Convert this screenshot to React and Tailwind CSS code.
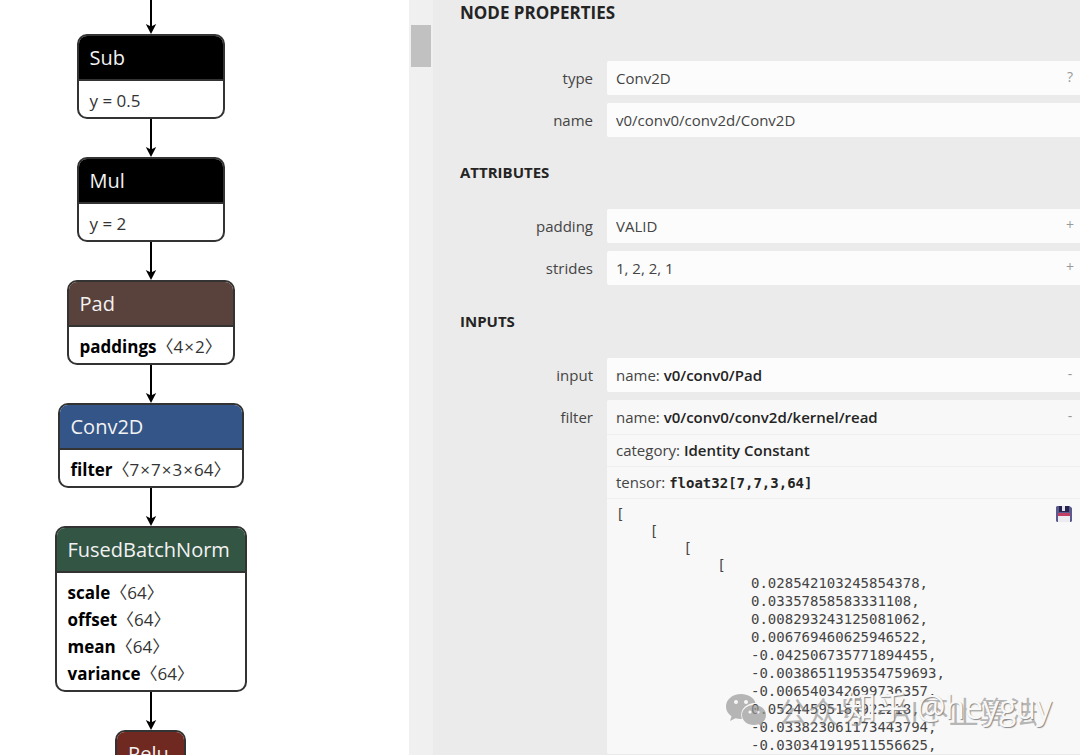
import React, { useState } from "react";

const nodes = [
    {
        name: "Sub",
        width: "w-[148px]",
        color: "bg-black",
        rows: [{ text: "y = 0.5" }],
    },
    {
        name: "Mul",
        width: "w-[148px]",
        color: "bg-black",
        rows: [{ text: "y = 2" }],
    },
    {
        name: "Pad",
        width: "w-[168px]",
        color: "bg-[#59423b]",
        rows: [{ label: "paddings", shape: [4, 2] }],
    },
    {
        name: "Conv2D",
        width: "w-[186px]",
        color: "bg-[#335588]",
        rows: [{ label: "filter", shape: [7, 7, 3, 64] }],
    },
    {
        name: "FusedBatchNorm",
        width: "w-[192px]",
        color: "bg-[#335544]",
        rows: [
            { label: "scale", shape: [64] },
            { label: "offset", shape: [64] },
            { label: "mean", shape: [64] },
            { label: "variance", shape: [64] },
        ],
    },
    { name: "Relu", width: "w-[71px]", color: "bg-[#702921]", rows: [] },
];

const brackets = `[
    [
        [
            [`;

const values = [
    "0.028542103245854378",
    "0.03357858583331108",
    "0.008293243125081062",
    "0.006769460625946522",
    "-0.042506735771894455",
    "-0.0038651195354759693",
    "-0.006540342699736357",
    "0.05244595184922218",
    "-0.033823061173443794",
    "-0.030341919511556625",
];

function Arrow() {
    return (
        <svg width="14" height="38" viewBox="0 0 14 38" className="block">
            <path d="M7 0V34" stroke="#000" strokeWidth="2" />
            <path d="M7 38L1.8 28L7 30.5L12.2 28Z" />
        </svg>
    );
}

function Shape({ dims }) {
    return (
        <span>
            〈
            {dims.map((dim, i) => (
                <React.Fragment key={i}>
                    {i > 0 && <span className="px-px">×</span>}
                    {dim}
                </React.Fragment>
            ))}
            〉
        </span>
    );
}

function GraphNode({ node }) {
    return (
        <div
            className={`${node.width} overflow-hidden rounded-[10px] border-2 border-[#333] bg-white`}
        >
            <h2
                className={`${node.color} h-[45px] border-b-2 border-[#333] pl-[11px] text-xl leading-[44px] text-[#f2f2f2]`}
            >
                {node.name}
            </h2>
            <ul className="px-[11px] pt-[6px] pb-[3px] text-[17px] leading-[27px] text-[#333]">
                {node.rows.map((row) => (
                    <li key={row.label || row.text} className="whitespace-nowrap">
                        {row.label && (
                            <b className="font-bold text-black">{row.label}</b>
                        )}
                        {row.shape ? <Shape dims={row.shape} /> : row.text}
                    </li>
                ))}
            </ul>
        </div>
    );
}

function Section({ title, children }) {
    return (
        <section>
            <h3 className="mb-[27px] leading-[20px] font-bold text-[#242424]">
                {title}
            </h3>
            <div className="mb-[26px] flex flex-col gap-2">{children}</div>
        </section>
    );
}

function Toggle({ sign, label, onClick }) {
    return (
        <button
            type="button"
            aria-label={label}
            onClick={onClick}
            className="h-[34px] w-5 shrink-0 pb-0.5 text-center text-sm text-[#999]"
        >
            {sign}
        </button>
    );
}

function Field({ id, value, sign }) {
    return (
        <div className="flex">
            <label
                htmlFor={id}
                className="w-[133px] shrink-0 text-right leading-[34px] text-[#444]"
            >
                {id}
            </label>
            <div className="ml-[14px] flex flex-1 rounded-l-xs bg-[#fcfcfc]">
                <input
                    id={id}
                    readOnly
                    defaultValue={value}
                    className="h-[34px] min-w-0 flex-1 pl-[9px] text-[#444] outline-none"
                />
                {sign && <Toggle sign={sign} label={`Expand ${id}`} />}
            </div>
        </div>
    );
}

function Argument({ id, name, color, onToggle, children }) {
    return (
        <div className="flex">
            <span className="w-[133px] shrink-0 text-right leading-[34px] text-[#444]">
                {id}
            </span>
            <div className={`${color} ml-[14px] min-w-0 flex-1 rounded-l-xs`}>
                <div className="flex h-[34px] justify-between">
                    <p className="pl-[9px] leading-[34px]">
                        name: <b className="font-semibold text-[#242424]">{name}</b>
                    </p>
                    <Toggle sign="-" label={`Collapse ${id}`} onClick={onToggle} />
                </div>
                {children}
            </div>
        </div>
    );
}

function SaveIcon() {
    return (
        <svg width="16" height="16" viewBox="0 0 16 16">
            <path d="M1 0H13.500L16 2V15L15 16H1L0 15V1Z" fill="#5a5a8c" />
            <path d="M3 0H13V6H3Z" fill="#28234c" />
            <path d="M6 0H9V5H6Z" fill="#e4e2f0" />
            <path d="M2 7H14V10H2Z" fill="#c43d62" />
            <path d="M2 10H14V16H2Z" fill="#ececf0" />
        </svg>
    );
}

function Watermark() {
    return (
        <div className="pointer-events-none absolute right-7 bottom-5 h-12 w-[326px]">
            <div className="flex h-full items-center gap-3 text-[30px] whitespace-nowrap text-[#8a8a8a]/60">
                <svg
                    width="40"
                    height="34"
                    viewBox="0 0 40 34"
                    className="shrink-0 opacity-70"
                >
                    <path
                        d="M15 0C6.500 0 0 5.500 0 12.500C0 16.500 2 20 5.500 22.200L4 27L9.500 24.200C11.300 24.700 13 25 15 25H16C13 16 20 9 29.500 9C28 3.500 22 0 15 0Z"
                        fill="#999"
                    />
                    <path
                        d="M28 11C21 11 16 15.500 16 21C16 27 21.500 31 28 31C29.500 31 31 30.800 32.500 30.300L37 33L36 28.800C38.500 27 40 24.200 40 21C40 15.500 35 11 28 11Z"
                        fill="#999"
                    />
                    <circle cx="10" cy="8" r="2" fill="#f8f8f8" />
                    <circle cx="20" cy="8" r="2" fill="#f8f8f8" />
                    <circle cx="24" cy="18" r="1.600" fill="#f8f8f8" />
                    <circle cx="32" cy="18" r="1.600" fill="#f8f8f8" />
                </svg>
                <span>公众号 · AI不止算法</span>
            </div>
            <span className="absolute right-0 bottom-2 text-[32px] leading-10 whitespace-nowrap text-[#f8f8f8] [text-shadow:1px_1px_1px_#888]">
                知乎 @heyguy
            </span>
        </div>
    );
}

export default function App() {
    const [open, setOpen] = useState(true);

    return (
        <div className="relative flex h-screen overflow-hidden bg-white font-['Open_Sans','Noto_Sans_CJK_SC',sans-serif]">
            <main className="w-[409px] shrink-0">
                <div className="-mt-1 flex w-[301px] flex-col items-center">
                    {nodes.map((node) => (
                        <React.Fragment key={node.name}>
                            <Arrow />
                            <GraphNode node={node} />
                        </React.Fragment>
                    ))}
                </div>
            </main>
            <div className="w-6 shrink-0 bg-[#f0f0f0] px-0.5 pt-[25px]">
                <div className="h-[42px] bg-[#c1c1c1]" />
            </div>
            <aside className="min-w-0 flex-1 bg-[#ebebeb] pl-[27px] text-[15px] text-[#444]">
                <h1 className="mb-[36px] text-[17px] leading-[25px] font-bold text-[#242424]">
                    NODE PROPERTIES
                </h1>
                <div className="mb-[25px] flex flex-col gap-2">
                    <Field id="type" value="Conv2D" sign="?" />
                    <Field id="name" value="v0/conv0/conv2d/Conv2D" />
                </div>
                <Section title="ATTRIBUTES">
                    <Field id="padding" value="VALID" sign="+" />
                    <Field id="strides" value="1, 2, 2, 1" sign="+" />
                </Section>
                <Section title="INPUTS">
                    <Argument id="input" name="v0/conv0/Pad" color="bg-[#fcfcfc]" />
                    <Argument
                        id="filter"
                        name="v0/conv0/conv2d/kernel/read"
                        color="bg-[#f8f8f8]"
                        onToggle={() => setOpen(!open)}
                    >
                        {open && (
                            <>
                                <p className="h-8 border-t border-[#efefef] pl-[9px] leading-[31px]">
                                    category:{" "}
                                    <b className="font-semibold text-[#242424]">
                                        Identity Constant
                                    </b>
                                </p>
                                <p className="h-8 border-t border-[#efefef] pl-[9px] leading-[31px]">
                                    tensor:{" "}
                                    <b className="font-['DejaVu_Sans_Mono',monospace] text-sm leading-none font-bold text-[#242424]">
                                        float32[7,7,3,64]
                                    </b>
                                </p>
                                <div className="flex items-start justify-between border-t border-[#efefef] pt-[7px] pr-2 pl-[9px]">
                                    <div className="font-['DejaVu_Sans_Mono',monospace] text-sm text-[#444]">
                                        <pre className="font-[inherit] leading-[17px]">
                                            {brackets}
                                        </pre>
                                        <ul className="pl-[135px] leading-[18px]">
                                            {values.map((value) => (
                                                <li key={value}>{value},</li>
                                            ))}
                                        </ul>
                                    </div>
                                    <button type="button" aria-label="Save tensor">
                                        <SaveIcon />
                                    </button>
                                </div>
                            </>
                        )}
                    </Argument>
                </Section>
            </aside>
            <Watermark />
        </div>
    );
}
